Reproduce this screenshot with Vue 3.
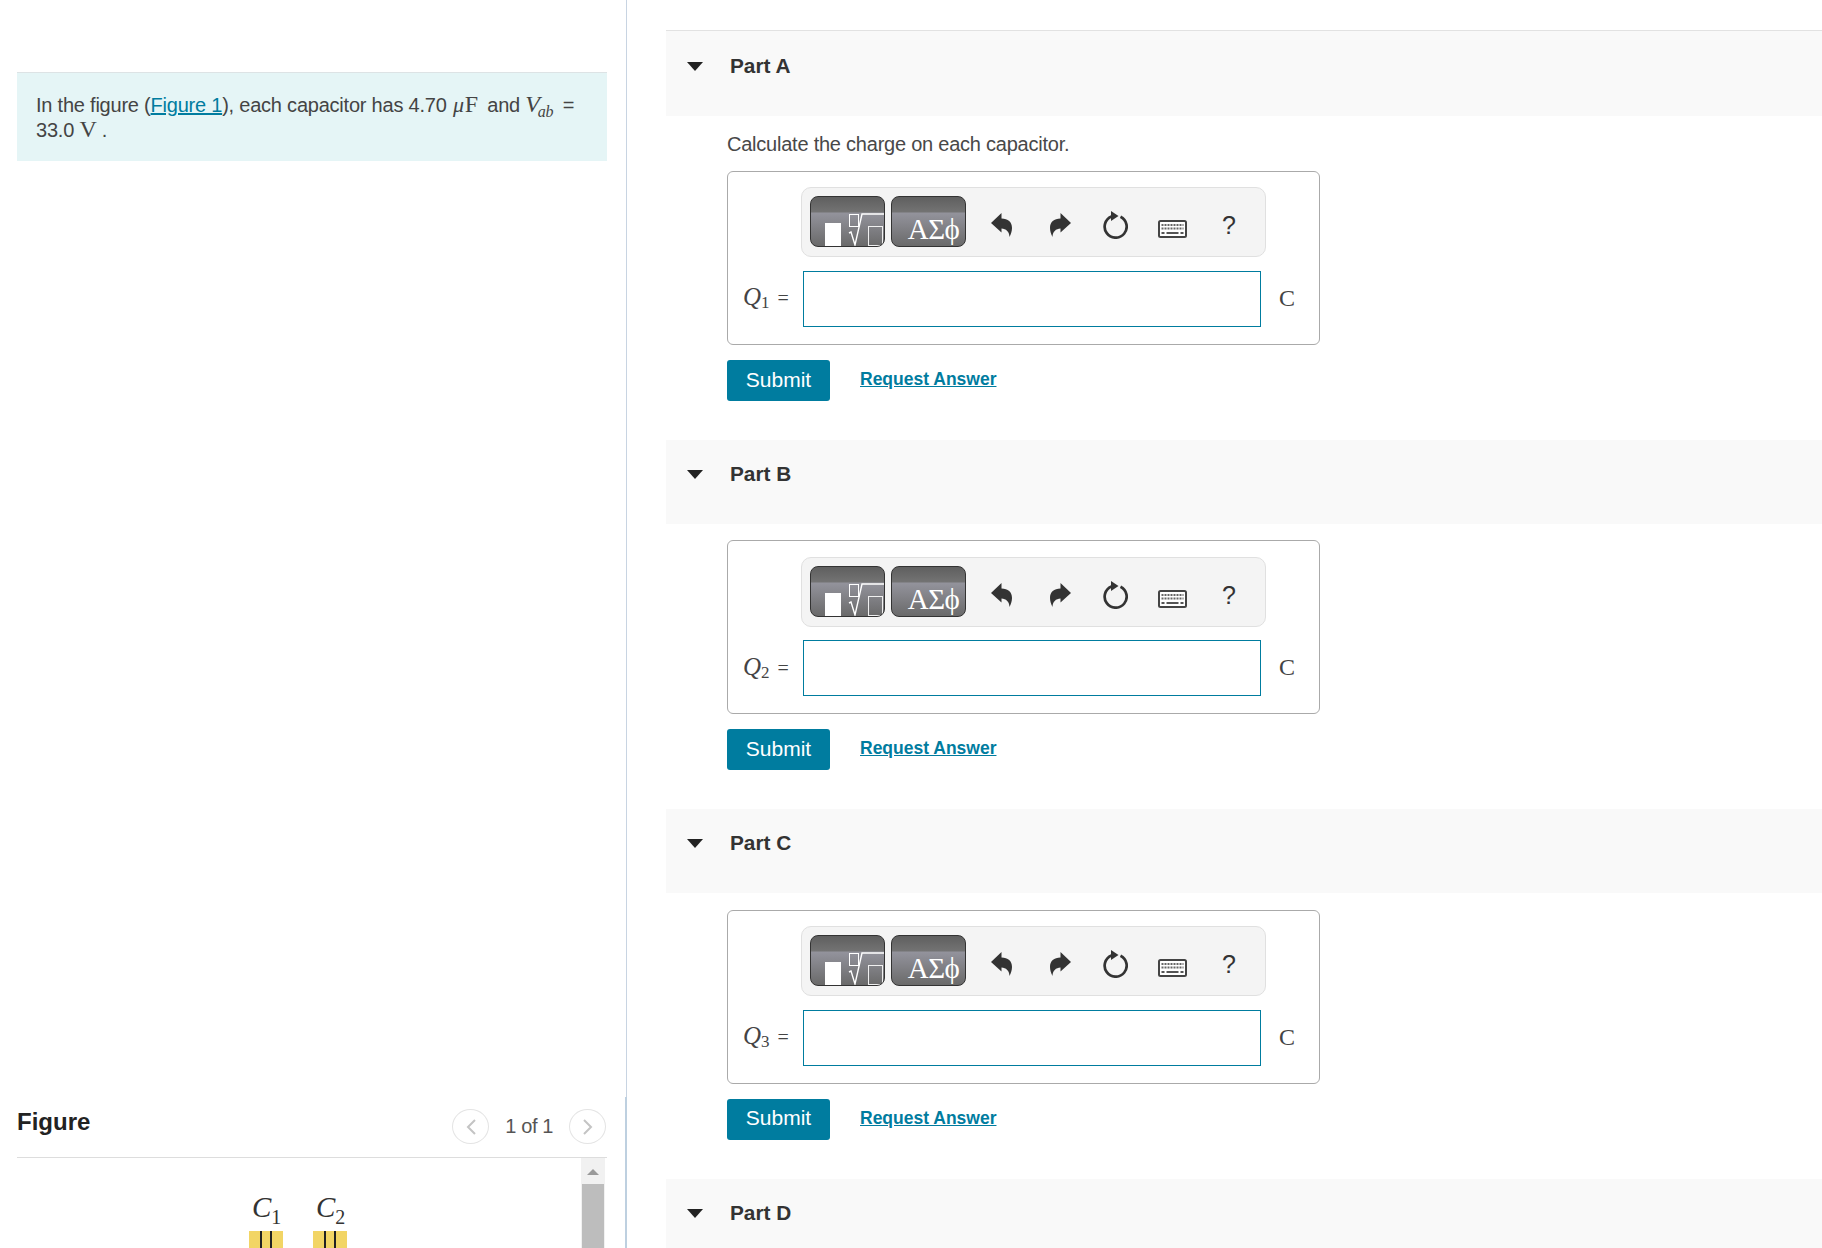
<script setup>
const parts = [
  { name: 'Part A', sub: '1', intro: 'Calculate the charge on each capacitor.' },
  { name: 'Part B', sub: '2', intro: '' },
  { name: 'Part C', sub: '3', intro: '' }
]
</script>

<template>
  <div class="page">
    <aside class="left">
      <div class="info">
        In the figure (<a class="fig-link">Figure 1</a>), each capacitor has 4.70 <span class="m it mu">μ</span><span class="m ef">F</span> and <span class="m it">V</span><sub class="m it ab">ab</sub> =
        <br />33.0 <span class="m">V</span> .
      </div>
      <div class="spacer"></div>
      <section class="figure">
        <header class="fig-head">
          <h2>Figure</h2>
          <div class="pager">
            <span class="circle"><svg width="12" height="18" viewBox="0 0 12 18"><path d="M10 2 3 9l7 7" fill="none" stroke="#c4c4c4" stroke-width="2" /></svg></span>
            <span class="count">1 of 1</span>
            <span class="circle"><svg width="12" height="18" viewBox="0 0 12 18"><path d="M2 2l7 7-7 7" fill="none" stroke="#c4c4c4" stroke-width="2" /></svg></span>
          </div>
        </header>
        <div class="fig-body">
          <div class="diagram">
            <div class="cap">
              <span class="cap-label"><i>C</i><sub>1</sub></span>
              <span class="plate"><b></b><b></b></span>
            </div>
            <div class="cap">
              <span class="cap-label"><i>C</i><sub>2</sub></span>
              <span class="plate"><b></b><b></b></span>
            </div>
          </div>
          <div class="scroll">
            <span class="up"></span>
            <span class="thumb"></span>
          </div>
        </div>
      </section>
    </aside>

    <main class="right">
      <section v-for="p in parts" :key="p.name" class="part">
        <header class="part-head" :class="{ first: p.sub === '1' }">
          <span class="caret"></span>
          <h3>{{ p.name }}</h3>
        </header>
        <div class="part-body" :class="{ 'has-intro': p.intro }">
          <p v-if="p.intro" class="intro">{{ p.intro }}</p>
          <div class="answer">
            <div class="toolbar">
              <div class="tpl">
                <span class="white"></span>
                <svg class="radical" width="73" height="49" viewBox="0 0 73 49">
                  <rect x="38.5" y="17.5" width="9" height="12" fill="none" stroke="#fff" />
                  <path d="M38 36l2-1 4 13 7-31h22" fill="none" stroke="#fff" stroke-width="1.4" />
                  <rect x="57.5" y="29.5" width="14" height="19" fill="none" stroke="#f0f0f0" />
                </svg>
              </div>
              <div class="tpl sym"><span>ΑΣϕ</span></div>
              <div class="tools">
                <svg class="i-undo" width="21" height="24" viewBox="0 0 21 24"><path d="M0 10 10.500 0v5.500C17 5.500 21 9 21 15c0 3-1 6-2.500 9 0-5-3.500-8.500-8-8.500v4z" fill="#333" /></svg>
                <svg class="i-redo" width="21" height="24" viewBox="0 0 21 24"><path d="M21 10 10.500 0v5.500C4 5.500 0 9 0 15c0 3 1 6 2.500 9 0-5 3.500-8.500 8-8.500v4z" fill="#333" /></svg>
                <svg class="i-ref" width="25" height="28" viewBox="0 0 25 28"><path d="M8.500 5.500A11 11 0 1 0 17.500 5.800" fill="none" stroke="#333" stroke-width="2.700" /><path d="M8 0l7.500 5-7.500 5z" fill="#333" /></svg>
                <svg class="i-kbd" width="29" height="18" viewBox="0 0 29 18">
                  <rect x="1" y="1" width="27" height="16" rx="1.500" fill="#fff" stroke="#444" stroke-width="2" />
                  <path d="M3.500 5h22M3.500 8.500h22" stroke="#666" stroke-width="2" stroke-dasharray="2 1" />
                  <path d="M3.500 13h3M8.500 13h12M22.500 13h3" stroke="#555" stroke-width="2" />
                </svg>
                <span class="help">?</span>
              </div>
            </div>
            <div class="row">
              <span class="qlabel"><i>Q</i><sub>{{ p.sub }}</sub><span class="eq">=</span></span>
              <input class="field" type="text" />
              <span class="unit">C</span>
            </div>
          </div>
          <div class="actions">
            <button class="submit" type="button"><span>Submit</span></button>
            <a class="request">Request Answer</a>
          </div>
        </div>
      </section>
      <section class="part">
        <header class="part-head">
          <span class="caret"></span>
          <h3>Part D</h3>
        </header>
      </section>
    </main>
  </div>
</template>

<style>
html, body { margin: 0; background: #fff; overflow: hidden; }
</style>

<style scoped>
.page {
  display: flex;
  height: 1248px;
  overflow: hidden;
  font-family: "Liberation Sans", Arial, sans-serif;
  color: #333;
}
.left {
  box-sizing: border-box;
  width: 627px;
  flex: none;
  display: flex;
  flex-direction: column;
  padding: 72px 19px 0 17px;
  border-right: 1px solid #c8d4e2;
  position: relative;
}
.left::after {
  content: "";
  position: absolute;
  right: -1px;
  bottom: 0;
  width: 2px;
  height: 151px;
  background: #bed0e0;
}
.info {
  height: 89px;
  box-sizing: border-box;
  padding: 20px 19px 0;
  background: #e5f5f6;
  border-top: 1px solid #dde3e5;
  font-size: 20px;
  line-height: 25px;
  letter-spacing: -0.22px;
  color: #444;
}
.fig-link { color: #007c9f; text-decoration: underline; }
.m { font-family: "Liberation Serif", serif; font-size: 24px; line-height: 0; }
.mu { font-size: 22px; margin-left: 1px; }
.ef { margin-right: 4px; margin-left: 1px; }
.it { font-style: italic; }
.ab { font-size: 16px; line-height: 0; margin-left: -2px; margin-right: 4px; }
.spacer { flex: 1; }
.figure { height: 141px; flex: none; }
.fig-head {
  height: 50px;
  display: flex;
  align-items: flex-start;
  justify-content: space-between;
  border-bottom: 1px solid #ddd;
}
.fig-head h2 {
  margin: 0;
  font-size: 24px;
  line-height: 30px;
  font-weight: 700;
  color: #222;
}
.pager { display: flex; align-items: center; gap: 14px; margin: 2px 1px 0 0; font-size: 20px; color: #555; letter-spacing: -0.4px; }
.circle {
  box-sizing: border-box;
  width: 37px;
  height: 35px;
  border: 1px solid #e4e4e4;
  border-radius: 50%;
  display: flex;
  align-items: center;
  justify-content: center;
}
.count { margin: 0 2px 0 2px; }
.fig-body { display: flex; height: 91px; overflow: hidden; }
.diagram {
  flex: 1;
  display: flex;
  justify-content: center;
  gap: 30px;
  padding: 33px 2px 0 0;
}
.cap { display: flex; flex-direction: column; width: 34px; }
.cap-label { font-family: "Liberation Serif", serif; font-size: 29px; line-height: 32px; color: #333; white-space: nowrap; margin-left: 3px; }
.cap-label sub { font-size: 20px; line-height: 0; }
.plate {
  width: 34px;
  height: 30px;
  margin-top: 8px;
  background: #f2d565;
  display: flex;
  justify-content: center;
  gap: 8px;
}
.plate b { width: 2px; background: #222; }
.scroll { width: 24px; flex: none; display: flex; flex-direction: column; align-items: center; background: #f1f1f1; margin-right: 2px; }
.up {
  width: 0; height: 0;
  margin: 11px 0 9px;
  border-left: 6px solid transparent;
  border-right: 6px solid transparent;
  border-bottom: 6px solid #9a9a9a;
}
.thumb { width: 22px; flex: 1; background: #bdbdbd; }

.right { flex: 1; min-width: 0; padding: 30px 0 0 39px; }
.part-head {
  height: 84px;
  box-sizing: border-box;
  background: #f9f9f9;
  display: flex;
  align-items: flex-start;
  padding: 22px 0 0 21px;
}
.part-head.first { height: 86px; border-top: 1px solid #e2e2e2; padding-top: 23px; }
.part-head h3 { margin: 0 0 0 27px; font-size: 20.8px; line-height: 24px; font-weight: 700; color: #333; }
.caret {
  width: 0; height: 0;
  margin-top: 8px;
  border-left: 8px solid transparent;
  border-right: 8px solid transparent;
  border-top: 9px solid #222;
}
.part-body { padding: 16.4px 0 39px 61px; }
.part-body.has-intro { padding-top: 15px; }
.intro { margin: 0 0 14px; font-size: 20px; line-height: 26px; color: #484848; letter-spacing: -0.23px; }
.answer {
  box-sizing: border-box;
  width: 593px;
  height: 174px;
  border: 1px solid #aaa;
  border-radius: 6px;
  padding: 15.2px 0 0 73px;
}
.toolbar {
  box-sizing: border-box;
  width: 465px;
  height: 70px;
  background: #f4f4f4;
  border: 1px solid #e0e0e0;
  border-radius: 10px;
  display: flex;
  align-items: flex-start;
  padding: 8px 0 0 8px;
  gap: 6px;
}
.tpl {
  box-sizing: border-box;
  width: 75px;
  height: 51px;
  border: 1px solid #333;
  border-radius: 8px;
  background: linear-gradient(#5f5f5f 0, #737373 15px, #93939c 16px, #6a6a6a 100%);
  position: relative;
  overflow: hidden;
}
.white { position: absolute; left: 14px; bottom: 0; width: 16px; height: 23px; background: #fff; }
.radical { position: absolute; left: 0; top: 0; }
.sym { display: flex; align-items: flex-end; justify-content: center; }
.sym span {
  font-family: "Liberation Serif", serif;
  font-size: 29px;
  line-height: 34px;
  color: #fff;
  letter-spacing: -0.5px;
  padding-left: 10px;
  white-space: nowrap;
}
.tools {
  display: flex;
  align-items: center;
  height: 58px;
}
.i-undo { margin-left: 19px; }
.i-redo { margin-left: 38px; }
.i-ref { margin-left: 32px; }
.i-kbd { margin-left: 30px; margin-top: 8px; }
.help { font-size: 25px; line-height: 28px; color: #333; margin-left: 35px; }
.row {
  display: flex;
  align-items: center;
  margin: 13.8px 0 0 -73px;
}
.qlabel {
  width: 60px;
  padding-left: 15px;
  font-family: "Liberation Serif", serif;
  font-size: 25px;
  line-height: 30px;
  white-space: nowrap;
  color: #444;
  flex: none;
  margin-bottom: 2px;
}
.qlabel sub { font-size: 17px; line-height: 0; vertical-align: -3px; }
.eq { font-size: 20px; margin-left: 8px; }
.field {
  box-sizing: border-box;
  width: 458px;
  height: 56px;
  border: 1px solid #007c9f;
  background: #fff;
  outline: none;
  margin: 0;
  padding: 0;
}
.unit { font-family: "Liberation Serif", serif; font-size: 24px; line-height: 28px; color: #444; margin: 0 0 2px 18px; }
.actions { display: flex; align-items: center; margin-top: 15px; }
.submit {
  width: 103px;
  height: 41px;
  border: 0;
  border-radius: 3px;
  background: #007c9f;
  color: #fff;
  font-family: inherit;
  font-size: 21px;
  padding: 0 0 2px;
}
.request {
  margin-left: 30px;
  margin-bottom: 2px;
  font-size: 17.5px;
  font-weight: 700;
  color: #007c9f;
  text-decoration: underline;
}
</style>
